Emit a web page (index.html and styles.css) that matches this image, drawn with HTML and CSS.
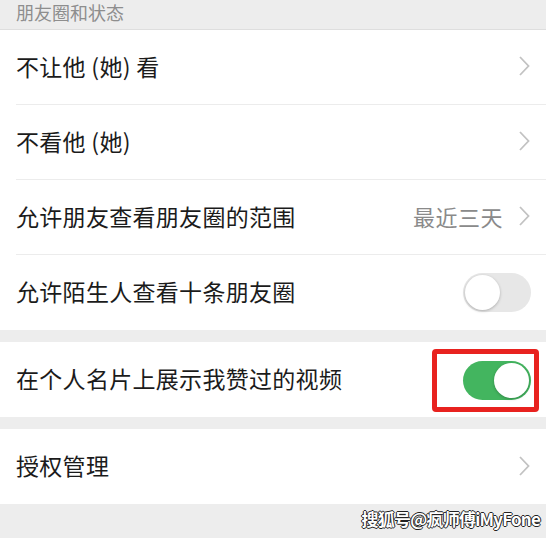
FILE: index.html
```html
<!DOCTYPE html>
<html lang="zh">
<head>
<meta charset="utf-8">
<link rel="stylesheet" href="styles.css">
</head>
<body>
<div class="page">
  <div class="section-title">朋友圈和状态</div>

  <div class="group">
    <div class="row"><span class="label">不让他 (她) 看</span><svg class="chev" viewBox="0 0 11 20"><polyline points="1,1 9.5,10 1,19"/></svg></div>
    <div class="row"><span class="label">不看他 (她)</span><svg class="chev" viewBox="0 0 11 20"><polyline points="1,1 9.5,10 1,19"/></svg></div>
    <div class="row"><span class="label">允许朋友查看朋友圈的范围</span><span class="value">最近三天</span><svg class="chev" viewBox="0 0 11 20"><polyline points="1,1 9.5,10 1,19"/></svg></div>
    <div class="row"><span class="label">允许陌生人查看十条朋友圈</span><span class="switch"><span class="knob"></span></span></div>
  </div>

  <div class="group">
    <div class="row"><span class="label">在个人名片上展示我赞过的视频</span>
      <span class="mark"><span class="switch on"><span class="knob"></span></span></span>
    </div>
  </div>

  <div class="group">
    <div class="row"><span class="label">授权管理</span><svg class="chev" viewBox="0 0 11 20"><polyline points="1,1 9.5,10 1,19"/></svg></div>
  </div>

  <div class="footer"></div>
  <div class="watermark">搜狐号@疯师傅iMyFone</div>
</div>
</body>
</html>
```

FILE: styles.css
```css
html, body {
  margin: 0;
  padding: 0;
  background: #ededed;
}

.page {
  position: relative;
  width: 546px;
  height: 538px;
  overflow: hidden;
  font-family: "Noto Sans CJK SC", "Noto Sans", sans-serif;
  color: #1b1b1b;
}

.section-title {
  height: 29px;
  line-height: 24px;
  padding-left: 16px;
  font-size: 18px;
  color: #8e8e8e;
  border-bottom: 1px solid #dedede;
  overflow: hidden;
}

.group {
  background: #ffffff;
  margin-bottom: 12px;
}

.row {
  box-sizing: border-box;
  height: 75px;
  margin-left: 16px;
  padding-right: 16px;
  display: flex;
  align-items: center;
  border-bottom: 1px solid #ececec;
}

.group .row:last-child {
  border-bottom: none;
}

.label {
  flex: 1;
  font-size: 23px;
  letter-spacing: 0.3px;
  padding-bottom: 3px;
}

.value {
  font-size: 22px;
  color: #8a8a8a;
  margin-right: 16px;
  letter-spacing: 0.5px;
  padding-bottom: 3px;
}

.chev {
  width: 11px;
  height: 20px;
  margin-right: 0;
  margin-bottom: 2px;
  fill: none;
  stroke: #c2c2c2;
  stroke-width: 1.8;
}

.switch {
  position: relative;
  width: 68px;
  height: 39px;
  border-radius: 20px;
  background: #e7e7e7;
  box-sizing: border-box;
  margin-right: -1px;
}

.switch .knob {
  position: absolute;
  top: 2px;
  left: 2px;
  width: 35px;
  height: 35px;
  border-radius: 50%;
  background: #ffffff;
  box-shadow: 0 1px 3px rgba(0, 0, 0, 0.25);
}

.switch.on {
  background: #43b55f;
}

.switch.on .knob {
  left: auto;
  right: 2px;
}

.mark {
  display: flex;
  align-items: center;
  justify-content: center;
  box-sizing: border-box;
  width: 107px;
  height: 63px;
  border: 5px solid #e8221f;
  border-radius: 4px;
  margin-top: 2px;
  margin-right: -9px;
  padding-left: 22px;
}

.footer {
  height: 34px;
}

.watermark {
  position: absolute;
  right: 6px;
  bottom: 7px;
  font-size: 17px;
  font-weight: bold;
  color: #ffffff;
  letter-spacing: -0.8px;
  text-shadow: 1px 0 0 #222, -1px 0 0 #222, 0 1px 0 #222, 0 -1px 0 #222;
}
```
